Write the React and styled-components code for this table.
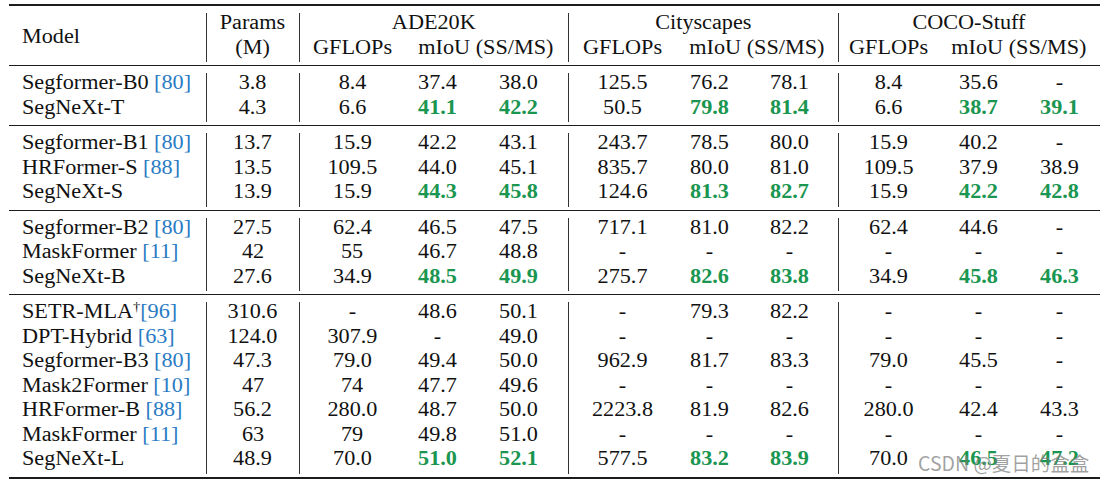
import React from 'react';
import styled, { createGlobalStyle } from 'styled-components';

const GlobalStyle = createGlobalStyle`
    body {
        margin: 0;
        background: #fff;
        font-family: "Liberation Serif", "Times New Roman", serif;
    }
`;

const GREEN = '#1a9650';
const BLUE = '#2a7bc4';

const Page = styled.div`
    position: relative;
    width: 1106px;
    height: 482px;
    padding: 4px 0 0 9px;
    box-sizing: border-box;
    overflow: hidden;
`;

const Table = styled.table`
    width: 1091px;
    table-layout: fixed;
    border-collapse: collapse;
    border-spacing: 0;
    font-size: 20px;
    color: #111;
`;

const Cell = styled.td`
    padding: 0 0 6px;
    line-height: 18.5px;
    height: 18.5px;
    text-align: ${p => (p.$left ? 'left' : 'center')};
    padding-left: ${p => (p.$left ? '13px' : '0')};
    border-left: ${p => (p.$divider ? '1px solid #333' : 'none')};
    white-space: nowrap;
    font-weight: ${p => (p.$best ? 'bold' : 'normal')};
    color: ${p => (p.$best ? GREEN : 'inherit')};
`;

const ModelHead = styled(Cell)`
    vertical-align: middle;
    padding-bottom: 2px;
`;

const Txt = styled.span`
    display: inline-block;
    transform: scaleX(1.11);
    transform-origin: ${p => (p.$left ? 'left center' : 'center')};
`;

const Cite = styled.span`
    color: ${BLUE};
`;

const Dagger = styled.sup`
    font-size: 13px;
    line-height: 0;
    vertical-align: 7px;
`;

const RuleCell = styled.td`
    padding: ${p => p.$above}px 0 ${p => p.$below}px;
    line-height: 0;
`;

const Line = styled.div`
    height: ${p => p.$thick}px;
    background: #1c1c1c;
`;

const Watermark = styled.div`
    position: absolute;
    left: 918px;
    top: 451px;
    font-family: "Noto Sans CJK SC", "Noto Sans", sans-serif;
    font-size: 19.5px;
    line-height: 24px;
    color: rgba(125, 125, 125, 0.72);
    white-space: nowrap;
`;

const widths = [197, 93, 106, 64, 99, 108, 66, 96, 100, 80, 82];

const sections = [
    [
        { name: 'Segformer-B0', cite: '80', params: '3.8', vals: ['8.4', '37.4', '38.0', '125.5', '76.2', '78.1', '8.4', '35.6', '-'] },
        { name: 'SegNeXt-T', ours: true, params: '4.3', vals: ['6.6', '41.1', '42.2', '50.5', '79.8', '81.4', '6.6', '38.7', '39.1'] },
    ],
    [
        { name: 'Segformer-B1', cite: '80', params: '13.7', vals: ['15.9', '42.2', '43.1', '243.7', '78.5', '80.0', '15.9', '40.2', '-'] },
        { name: 'HRFormer-S', cite: '88', params: '13.5', vals: ['109.5', '44.0', '45.1', '835.7', '80.0', '81.0', '109.5', '37.9', '38.9'] },
        { name: 'SegNeXt-S', ours: true, params: '13.9', vals: ['15.9', '44.3', '45.8', '124.6', '81.3', '82.7', '15.9', '42.2', '42.8'] },
    ],
    [
        { name: 'Segformer-B2', cite: '80', params: '27.5', vals: ['62.4', '46.5', '47.5', '717.1', '81.0', '82.2', '62.4', '44.6', '-'] },
        { name: 'MaskFormer', cite: '11', params: '42', vals: ['55', '46.7', '48.8', '-', '-', '-', '-', '-', '-'] },
        { name: 'SegNeXt-B', ours: true, params: '27.6', vals: ['34.9', '48.5', '49.9', '275.7', '82.6', '83.8', '34.9', '45.8', '46.3'] },
    ],
    [
        { name: 'SETR-MLA', dagger: true, cite: '96', params: '310.6', vals: ['-', '48.6', '50.1', '-', '79.3', '82.2', '-', '-', '-'] },
        { name: 'DPT-Hybrid', cite: '63', params: '124.0', vals: ['307.9', '-', '49.0', '-', '-', '-', '-', '-', '-'] },
        { name: 'Segformer-B3', cite: '80', params: '47.3', vals: ['79.0', '49.4', '50.0', '962.9', '81.7', '83.3', '79.0', '45.5', '-'] },
        { name: 'Mask2Former', cite: '10', params: '47', vals: ['74', '47.7', '49.6', '-', '-', '-', '-', '-', '-'] },
        { name: 'HRFormer-B', cite: '88', params: '56.2', vals: ['280.0', '48.7', '50.0', '2223.8', '81.9', '82.6', '280.0', '42.4', '43.3'] },
        { name: 'MaskFormer', cite: '11', params: '63', vals: ['79', '49.8', '51.0', '-', '-', '-', '-', '-', '-'] },
        { name: 'SegNeXt-L', ours: true, params: '48.9', vals: ['70.0', '51.0', '52.1', '577.5', '83.2', '83.9', '70.0', '46.5', '47.2'] },
    ],
];

const datasets = ['ADE20K', 'Cityscapes', 'COCO-Stuff'];

const Rule = ({ above = 3, below = 7, thick = 1 }) => (
    <tr>
        <RuleCell colSpan={11} $above={above} $below={below}>
            <Line $thick={thick} />
        </RuleCell>
    </tr>
);

const ModelName = ({ row }) => (
    <Txt $left>
        {row.name}
        {row.dagger ? <Dagger>†</Dagger> : row.cite ? ' ' : null}
        {row.cite && <Cite>[{row.cite}]</Cite>}
    </Txt>
);

const DataRow = ({ row }) => (
    <tr>
        <Cell $left><ModelName row={row} /></Cell>
        <Cell $divider><Txt>{row.params}</Txt></Cell>
        {row.vals.map((v, i) => (
            <Cell key={i} $divider={i % 3 === 0} $best={row.ours && i % 3 !== 0}>
                <Txt>{v}</Txt>
            </Cell>
        ))}
    </tr>
);

export default function App() {
    return (
        <>
            <GlobalStyle />
            <Page>
                <Table>
                    <colgroup>
                        {widths.map((w, i) => <col key={i} style={{ width: w }} />)}
                    </colgroup>
                    <tbody>
                        <Rule above={0} below={7} thick={2} />
                        <tr>
                            <ModelHead $left rowSpan={2}><Txt $left>Model</Txt></ModelHead>
                            <Cell $divider><Txt>Params</Txt></Cell>
                            {datasets.map(d => (
                                <Cell key={d} $divider colSpan={3}><Txt>{d}</Txt></Cell>
                            ))}
                        </tr>
                        <tr>
                            <Cell $divider><Txt>(M)</Txt></Cell>
                            {datasets.map(d => (
                                <React.Fragment key={d}>
                                    <Cell $divider><Txt>GFLOPs</Txt></Cell>
                                    <Cell colSpan={2}><Txt>mIoU (SS/MS)</Txt></Cell>
                                </React.Fragment>
                            ))}
                        </tr>
                        {sections.map((rows, s) => (
                            <React.Fragment key={s}>
                                <Rule />
                                {rows.map((row, r) => <DataRow key={r} row={row} />)}
                            </React.Fragment>
                        ))}
                        <Rule above={3} below={0} thick={2} />
                    </tbody>
                </Table>
                <Watermark>CSDN @夏日的盒盒</Watermark>
            </Page>
        </>
    );
}
